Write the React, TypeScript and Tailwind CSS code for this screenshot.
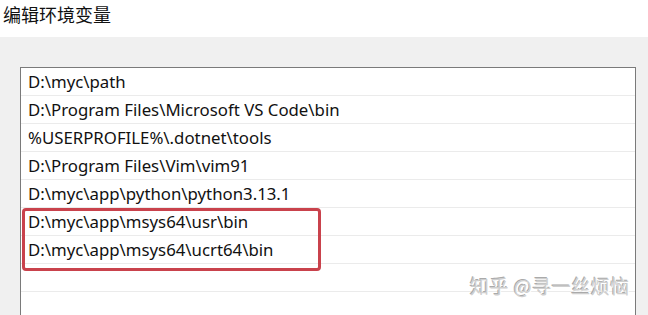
const paths = [
  "D:\\myc\\path",
  "D:\\Program Files\\Microsoft VS Code\\bin",
  "%USERPROFILE%\\.dotnet\\tools",
  "D:\\Program Files\\Vim\\vim91",
  "D:\\myc\\app\\python\\python3.13.1",
];

const highlighted = ["D:\\myc\\app\\msys64\\usr\\bin", "D:\\myc\\app\\msys64\\ucrt64\\bin"];

function Row({ text }: { text?: string }) {
  return (
    <div className="h-[28px] flex items-center pl-[7px] pt-[1px] border-b border-[#ebebeb] text-[16.8px] text-[#111] whitespace-nowrap">
      {text}
    </div>
  );
}

export default function App() {
  return (
    <div className="w-[648px] h-[315px] overflow-hidden bg-[#f0f0f0] font-['Noto_Sans','Noto_Sans_CJK_SC',sans-serif] relative">
      {/* Title */}
      <div className="h-[37px] bg-white pl-[3px] pt-[1px] text-[18px] text-[#111] font-['Noto_Sans_CJK_SC',sans-serif]">
        编辑环境变量
      </div>

      {/* List box */}
      <div className="pt-[30px] pl-[20px] pr-[12px]">
        <div className="h-[260px] bg-white border-t border-l border-r border-[#7a7a7a] relative">
          {paths.map((p) => (
            <Row key={p} text={p} />
          ))}
          <div className="relative">
            {highlighted.map((p) => (
              <Row key={p} text={p} />
            ))}
            <div className="absolute left-[1px] top-0 w-[299px] h-[63px] border-[3px] border-[#c9424c] rounded-[4px]" />
          </div>
          <Row />
          <Row />
        </div>
      </div>

      {/* Watermark */}
      <div className="absolute left-[470px] top-[272px] text-[19px] tracking-[0.5px] text-[#cfcfcf] font-['Noto_Sans_CJK_SC',sans-serif] [text-shadow:1px_1px_0_#fff,-1px_-1px_0_#aaa]">
        知乎 @寻一丝烦恼
      </div>
    </div>
  );
}
